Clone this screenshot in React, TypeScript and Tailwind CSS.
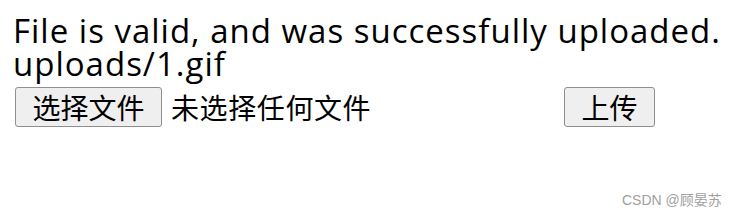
export default function App() {
  return (
    <div className="relative w-[738px] h-[216px] bg-white text-black overflow-hidden font-['Open_Sans','Noto_Sans_CJK_SC',sans-serif]">
      <div className="pl-[13px] pt-[14px]">
        <p className="text-[33px] leading-[33px] tracking-[1px]">File is valid, and was successfully uploaded.</p>
        <p className="text-[33px] leading-[33px] tracking-[1px]">uploads/1.gif</p>
        <div className="flex items-center mt-[7px] pl-[2px]">
          <div className="flex items-center w-[549px]">
            <button className="h-[40px] w-[147px] bg-[#efefef] border border-[#8f8f8f] rounded-[3px] text-[28px] leading-none font-['Noto_Sans_CJK_SC',sans-serif] flex items-center justify-center">
              选择文件
            </button>
            <span className="ml-[9px] text-[28px] leading-none tracking-[0.6px] font-['Noto_Sans_CJK_SC',sans-serif]">未选择任何文件</span>
          </div>
          <button className="h-[40px] w-[91px] bg-[#efefef] border border-[#8f8f8f] rounded-[3px] text-[28px] leading-none font-['Noto_Sans_CJK_SC',sans-serif] flex items-center justify-center">
            上传
          </button>
        </div>
      </div>
      <span className="absolute left-[622px] top-[190px] text-[14px] text-[#a0a0a0] font-['Liberation_Sans','Noto_Sans_CJK_SC',sans-serif]">CSDN @顾晏苏</span>
    </div>
  );
}
